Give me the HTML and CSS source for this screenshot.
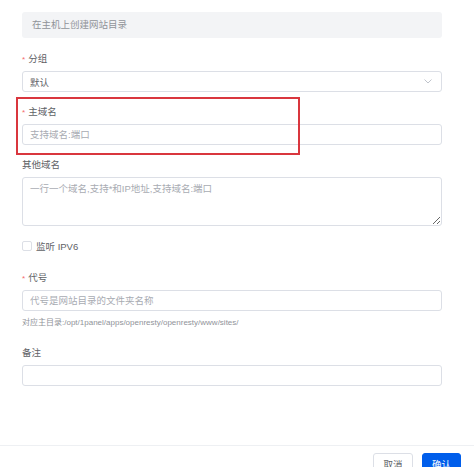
FILE: index.html
```html
<!DOCTYPE html>
<html lang="zh-CN">
<head>
<meta charset="utf-8">
<title>创建网站</title>
<link rel="stylesheet" href="styles.css">
</head>
<body>
<div class="page">
  <div class="form">
    <div class="alert">在主机上创建网站目录</div>

    <div class="item">
      <div class="label"><span class="req">*</span>分组</div>
      <div class="control select">
        <span class="value">默认</span>
        <svg class="chev" width="8" height="5" viewBox="0 0 8 5"><path d="M0.5 0.5 L4 4 L7.5 0.5" fill="none" stroke="#c0c4cc" stroke-width="1"/></svg>
      </div>
    </div>

    <div class="item">
      <div class="label"><span class="req">*</span>主域名</div>
      <input class="control input" placeholder="支持域名:端口">
    </div>

    <div class="item">
      <div class="label">其他域名</div>
      <textarea class="control textarea" placeholder="一行一个域名,支持*和IP地址,支持域名:端口"></textarea>
    </div>

    <label class="check">
      <span class="box"></span>
      <span class="check-text">监听 IPV6</span>
    </label>

    <div class="item item-tight">
      <div class="label"><span class="req">*</span>代号</div>
      <input class="control input" placeholder="代号是网站目录的文件夹名称">
      <div class="help">对应主目录:/opt/1panel/apps/openresty/openresty/www/sites/</div>
    </div>

    <div class="item">
      <div class="label">备注</div>
      <input class="control input">
    </div>
  </div>

  <div class="footer">
    <button class="btn">取消</button>
    <button class="btn primary">确认</button>
  </div>

  <div class="annot"></div>
</div>
</body>
</html>
```

FILE: styles.css
```css
html, body {
  margin: 0;
  padding: 0;
  background: #ffffff;
  overflow: hidden;
}

body {
  font-family: "Liberation Sans", "Noto Sans CJK SC", sans-serif;
  font-size: 9.5px;
  color: #606266;
}

.page {
  position: relative;
  width: 474px;
  height: 475px;
  display: flex;
  flex-direction: column;
}

.form {
  flex: 1;
  padding: 12px 32px 0 22px;
}

.alert {
  height: 26px;
  line-height: 26px;
  padding-left: 10px;
  background: #f3f4f6;
  color: #909399;
  border-radius: 3px;
  margin-bottom: 11px;
}

.item {
  margin-bottom: 10px;
}

.item-tight {
  margin-bottom: 14px;
}

.label {
  height: 20px;
  line-height: 20px;
  margin-bottom: 2px;
  color: #606266;
}

.req {
  color: #f56c6c;
  margin-right: 3px;
  font-size: 8px;
}

.control {
  box-sizing: border-box;
  display: block;
  width: 100%;
  height: 21px;
  border: 1px solid #dcdfe6;
  border-radius: 3px;
  background: #fff;
  font-family: inherit;
  font-size: 9.5px;
  color: #606266;
  margin: 0;
  outline: none;
}

.select {
  display: flex;
  align-items: center;
  justify-content: space-between;
  padding: 0 9px 0 7px;
}

.chev {
  display: block;
}

.input {
  padding: 0 7px;
}

.textarea {
  height: 49px;
  padding: 4px 7px;
  resize: vertical;
  line-height: 14px;
}

::placeholder {
  color: #a8abb2;
  opacity: 1;
}

.check {
  display: flex;
  align-items: center;
  height: 20px;
  margin-top: 6px;
  margin-bottom: 12px;
}

.box {
  box-sizing: border-box;
  width: 10px;
  height: 10px;
  border: 1px solid #dcdfe6;
  border-radius: 2px;
  margin-right: 4px;
}

.check-text {
  color: #606266;
}

.help {
  margin-top: 6px;
  height: 12px;
  line-height: 12px;
  font-size: 8px;
  color: #909399;
}

.footer {
  flex-shrink: 0;
  height: 30px;
  box-sizing: border-box;
  border-top: 1px solid #eef0f3;
  padding: 7px 13px 0 0;
  display: flex;
  justify-content: flex-end;
  gap: 9px;
}

.btn {
  box-sizing: border-box;
  width: 40px;
  height: 22px;
  border: 1px solid #dcdfe6;
  border-radius: 3px;
  background: #fff;
  color: #606266;
  font-family: inherit;
  font-size: 9.5px;
  padding: 0;
}

.btn.primary {
  width: 39px;
  background: #005eeb;
  border-color: #005eeb;
  color: #fff;
}

.annot {
  position: absolute;
  left: 16px;
  top: 97px;
  width: 284px;
  height: 58px;
  box-sizing: border-box;
  border: 2px solid #d9363e;
}
```
